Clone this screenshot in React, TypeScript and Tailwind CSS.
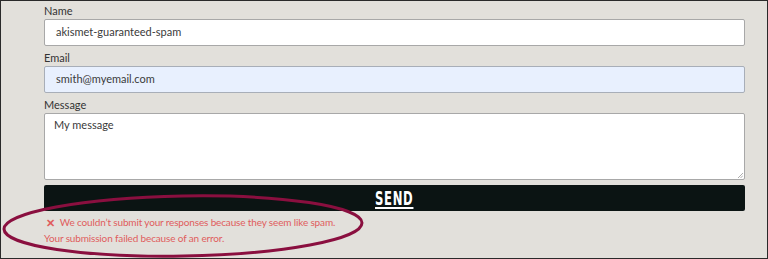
export default function App() {
  const font = { fontFamily: "Lato, 'Noto Sans', sans-serif" };
  return (
    <div className="relative h-[259px] w-[768px] overflow-hidden border border-[#2a2a2a] bg-[#e2e0db] text-[#3a3a3a]" style={font}>
      <div className="flex flex-col pl-[43px] pr-[22px] pt-[3px]">
        <label className="h-[14px] text-[11px] leading-[14px] text-[#333]">Name</label>
        <div className="mt-[1px] flex h-[27px] items-center rounded-[2px] border border-[#a8a8a8] bg-white px-[11px] text-[11px]">
          akismet-guaranteed-spam
        </div>
        <label className="mt-[5px] h-[14px] text-[11px] leading-[14px] text-[#333]">Email</label>
        <div className="mt-[1px] flex h-[27px] items-center rounded-[2px] border border-[#a8aeb8] bg-[#e8f0fe] px-[11px] text-[11px]">
          smith@myemail.com
        </div>
        <label className="mt-[5px] h-[14px] text-[11px] leading-[14px] text-[#333]">Message</label>
        <div className="relative mt-[1px] h-[67px] rounded-[2px] border border-[#a8a8a8] bg-white px-[9px] py-[3px] text-[11px]">
          My message
          <svg className="absolute bottom-[1px] right-[1px]" width="6" height="6" viewBox="0 0 6 6">
            <path d="M1 6 L6 1 M3.5 6 L6 3.5" stroke="#999" strokeWidth="0.8" />
          </svg>
        </div>
        <button className="mt-[5px] flex h-[26px] items-center justify-center rounded-[2px] bg-[#0b1413]">
          <span
            className="text-[19px] font-bold uppercase leading-none tracking-[1px] text-white underline decoration-[1.5px] underline-offset-[2px]"
            style={{ fontFamily: "'DejaVu Sans Condensed', 'Liberation Sans', sans-serif", transform: "scaleX(0.68)" }}
          >
            Send
          </span>
        </button>
        <div className="mt-[4px] flex items-center gap-[5px] pl-[2px] text-[10px] leading-[14px] tracking-[-0.15px] text-[#e05d5d]">
          <span className="text-[11px] font-bold leading-none">✕</span>
          <span>We couldn’t submit your responses because they seem like spam.</span>
        </div>
        <div className="mt-[2px] text-[10px] leading-[14px] tracking-[-0.15px] text-[#e05d5d]">Your submission failed because of an error.</div>
      </div>
      <svg className="pointer-events-none absolute left-0 top-0" width="768" height="259" viewBox="0 0 768 259">
        <ellipse cx="182" cy="225" rx="179" ry="30" fill="none" stroke="#8a0f3f" strokeWidth="3" transform="rotate(-1 182 225)" />
      </svg>
    </div>
  );
}
